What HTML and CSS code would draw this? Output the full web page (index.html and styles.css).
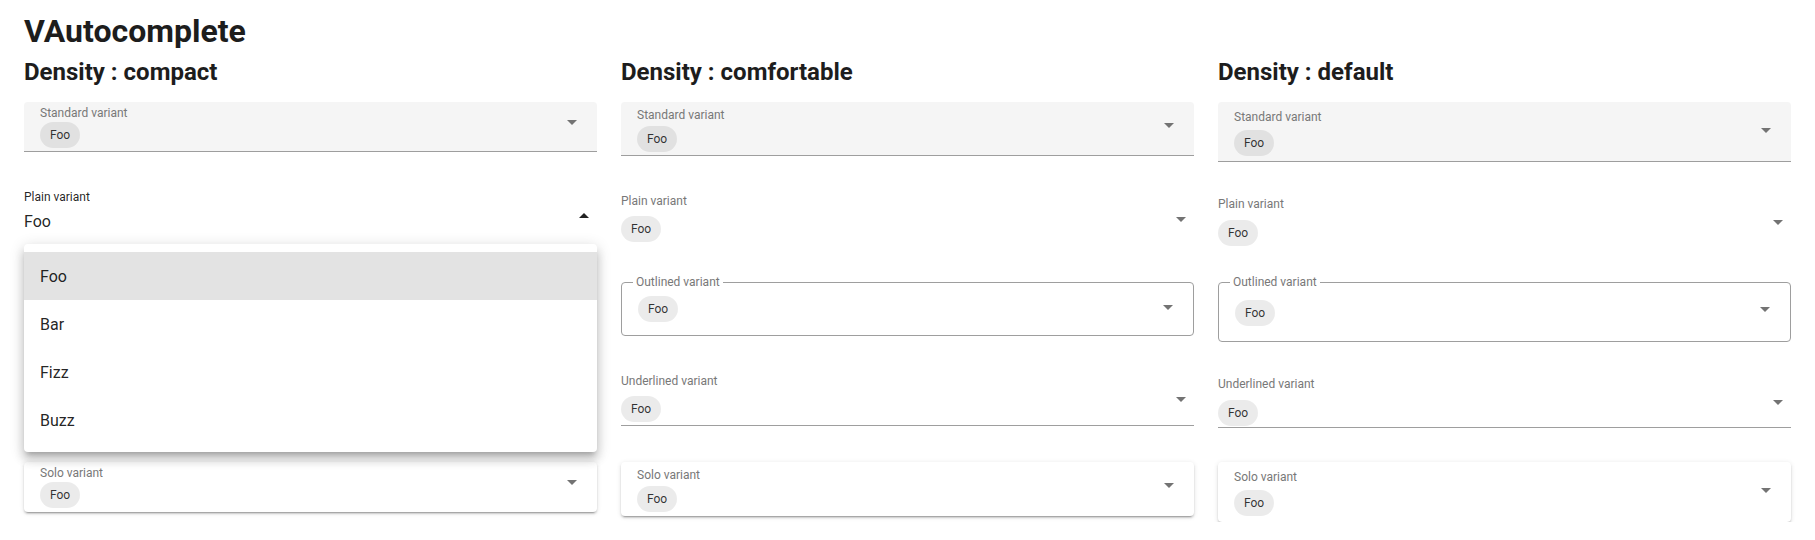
FILE: index.html
```html
<!DOCTYPE html>
<html lang="en">

<head>
    <meta charset="utf-8">
    <title>VAutocomplete</title>
    <link rel="stylesheet" href="styles.css">
</head>

<body>
    <div class="page">
        <h1 class="title">VAutocomplete</h1>

        <div class="columns">

            <!-- compact -->
            <section class="col compact">
                <h2 class="col-title">Density : compact</h2>

                <div class="cell">
                    <div class="field filled">
                        <div class="field-body">
                            <div class="label">Standard variant</div>
                            <span class="chip">Foo</span>
                        </div>
                        <svg class="arrow" viewBox="0 0 24 24"><path d="M7 10l5 5 5-5z" /></svg>
                    </div>
                </div>

                <!-- open menu covers the outlined + underlined rows -->
                <div class="cell">
                    <div class="field plain focused">
                        <div class="field-body">
                            <div class="label">Plain variant</div>
                            <div class="value">Foo</div>
                        </div>
                        <svg class="arrow" viewBox="0 0 24 24"><path d="M7 15l5-5 5 5z" /></svg>
                    </div>
                    <div class="menu">
                        <div class="menu-item active">Foo</div>
                        <div class="menu-item">Bar</div>
                        <div class="menu-item">Fizz</div>
                        <div class="menu-item">Buzz</div>
                    </div>
                </div>
                <div class="cell"></div>
                <div class="cell"></div>

                <div class="cell">
                    <div class="field solo">
                        <div class="field-body">
                            <div class="label">Solo variant</div>
                            <span class="chip">Foo</span>
                        </div>
                        <svg class="arrow" viewBox="0 0 24 24"><path d="M7 10l5 5 5-5z" /></svg>
                    </div>
                </div>
            </section>

            <!-- comfortable -->
            <section class="col comfortable">
                <h2 class="col-title">Density : comfortable</h2>

                <div class="cell">
                    <div class="field filled">
                        <div class="field-body">
                            <div class="label">Standard variant</div>
                            <span class="chip">Foo</span>
                        </div>
                        <svg class="arrow" viewBox="0 0 24 24"><path d="M7 10l5 5 5-5z" /></svg>
                    </div>
                </div>

                <div class="cell">
                    <div class="field plain">
                        <div class="field-body">
                            <div class="label">Plain variant</div>
                            <span class="chip">Foo</span>
                        </div>
                        <svg class="arrow" viewBox="0 0 24 24"><path d="M7 10l5 5 5-5z" /></svg>
                    </div>
                </div>

                <div class="cell">
                    <div class="field outlined">
                        <div class="label">Outlined variant</div>
                        <div class="field-body">
                            <span class="chip">Foo</span>
                        </div>
                        <svg class="arrow" viewBox="0 0 24 24"><path d="M7 10l5 5 5-5z" /></svg>
                    </div>
                </div>

                <div class="cell">
                    <div class="field underlined">
                        <div class="field-body">
                            <div class="label">Underlined variant</div>
                            <span class="chip">Foo</span>
                        </div>
                        <svg class="arrow" viewBox="0 0 24 24"><path d="M7 10l5 5 5-5z" /></svg>
                    </div>
                </div>

                <div class="cell">
                    <div class="field solo">
                        <div class="field-body">
                            <div class="label">Solo variant</div>
                            <span class="chip">Foo</span>
                        </div>
                        <svg class="arrow" viewBox="0 0 24 24"><path d="M7 10l5 5 5-5z" /></svg>
                    </div>
                </div>
            </section>

            <!-- default -->
            <section class="col default">
                <h2 class="col-title">Density : default</h2>

                <div class="cell">
                    <div class="field filled">
                        <div class="field-body">
                            <div class="label">Standard variant</div>
                            <span class="chip">Foo</span>
                        </div>
                        <svg class="arrow" viewBox="0 0 24 24"><path d="M7 10l5 5 5-5z" /></svg>
                    </div>
                </div>

                <div class="cell">
                    <div class="field plain">
                        <div class="field-body">
                            <div class="label">Plain variant</div>
                            <span class="chip">Foo</span>
                        </div>
                        <svg class="arrow" viewBox="0 0 24 24"><path d="M7 10l5 5 5-5z" /></svg>
                    </div>
                </div>

                <div class="cell">
                    <div class="field outlined">
                        <div class="label">Outlined variant</div>
                        <div class="field-body">
                            <span class="chip">Foo</span>
                        </div>
                        <svg class="arrow" viewBox="0 0 24 24"><path d="M7 10l5 5 5-5z" /></svg>
                    </div>
                </div>

                <div class="cell">
                    <div class="field underlined">
                        <div class="field-body">
                            <div class="label">Underlined variant</div>
                            <span class="chip">Foo</span>
                        </div>
                        <svg class="arrow" viewBox="0 0 24 24"><path d="M7 10l5 5 5-5z" /></svg>
                    </div>
                </div>

                <div class="cell">
                    <div class="field solo">
                        <div class="field-body">
                            <div class="label">Solo variant</div>
                            <span class="chip">Foo</span>
                        </div>
                        <svg class="arrow" viewBox="0 0 24 24"><path d="M7 10l5 5 5-5z" /></svg>
                    </div>
                </div>
            </section>

        </div>
    </div>
</body>

</html>
```

FILE: styles.css
```css
* {
    box-sizing: border-box;
}

body {
    margin: 0;
    background-color: #fff;
    color: rgba(0, 0, 0, 0.87);
    font-family: Roboto, "Liberation Sans", sans-serif;
}

.page {
    padding: 12px 12px 0;
}

.title {
    margin: 0;
    padding-left: 12px;
    font-size: 32px;
    line-height: 38px;
    font-weight: 700;
    color: #1d1d1d;
}

.columns {
    display: grid;
    grid-template-columns: repeat(3, 1fr);
}

.col {
    padding: 0 12px;
}

.col-title {
    margin: 8px 0 16px;
    font-size: 24px;
    line-height: 28px;
    font-weight: 700;
    color: #1d1d1d;
}

.cell {
    position: relative;
    height: 90px;
}

.cell:last-child {
    height: auto;
}

/* field basics */

.field {
    position: relative;
    display: flex;
    align-items: flex-start;
    padding: 0 13px 0 16px;
}

.field-body {
    flex: 1;
    min-width: 0;
}

.label {
    font-size: 12px;
    line-height: 16px;
    color: #787878;
    white-space: nowrap;
}

.chip {
    display: flex;
    align-items: center;
    width: max-content;
    height: 26px;
    padding: 0 10px;
    border-radius: 13px;
    background-color: rgba(0, 0, 0, 0.08);
    font-size: 12px;
    color: rgba(0, 0, 0, 0.8);
}

.arrow {
    flex: none;
    width: 24px;
    height: 24px;
    fill: #737373;
}

/* variants */

.filled {
    background-color: #f5f5f5;
    border-radius: 4px 4px 0 0;
    border-bottom: 1px solid #9e9e9e;
}

.solo {
    background-color: #fff;
    border-radius: 4px;
    box-shadow: 0 3px 1px -2px rgba(0, 0, 0, 0.2), 0 2px 2px 0 rgba(0, 0, 0, 0.14), 0 1px 5px 0 rgba(0, 0, 0, 0.12);
}

.outlined {
    border: 1px solid #9e9e9e;
    border-radius: 4px;
}

.outlined .label {
    position: absolute;
    left: 11px;
    top: -9px;
    padding: 0 3px;
    background-color: #fff;
}

.plain,
.underlined {
    padding: 0 1px 0 0;
}

.underlined {
    border-bottom: 1px solid #9e9e9e;
}

/* focused plain field with open menu */

.focused .label {
    margin-top: -3px;
    color: rgba(0, 0, 0, 0.87);
}

.focused .value {
    margin-top: 5px;
    padding-bottom: 8px;
    font-size: 16px;
    line-height: 24px;
}

.focused .arrow {
    margin-top: 11px;
    fill: #222;
}

.menu {
    position: absolute;
    top: 52px;
    left: 0;
    right: 0;
    z-index: 5;
    padding: 8px 0;
    background-color: #fff;
    border-radius: 4px;
    box-shadow: 0 5px 5px -3px rgba(0, 0, 0, 0.2), 0 8px 10px 1px rgba(0, 0, 0, 0.14), 0 3px 14px 2px rgba(0, 0, 0, 0.12);
}

.menu-item {
    display: flex;
    align-items: center;
    height: 48px;
    padding: 0 16px;
    font-size: 16px;
}

.menu-item.active {
    background-color: #e3e3e3;
}

/* density: compact */

.compact .filled .field-body {
    padding: 3px 0 3px;
}

.compact .solo .field-body {
    padding: 3px 0 4px;
}

.compact .filled .label,
.compact .solo .label {
    margin-bottom: 1px;
}

.compact .filled .arrow,
.compact .solo .arrow {
    margin-top: 8px;
}

/* density: comfortable */

.comfortable .filled .field-body {
    padding: 5px 0 3px;
}

.comfortable .solo .field-body {
    padding: 5px 0 4px;
}

.comfortable .filled .label,
.comfortable .solo .label {
    margin-bottom: 3px;
}

.comfortable .filled .arrow,
.comfortable .solo .arrow {
    margin-top: 11px;
}

.comfortable .plain .field-body {
    padding: 1px 0 4px;
}

.comfortable .underlined .field-body {
    padding: 1px 0 3px;
}

.comfortable .plain .label,
.comfortable .underlined .label {
    margin-bottom: 7px;
}

.comfortable .plain .arrow,
.comfortable .underlined .arrow {
    margin-top: 15px;
}

.comfortable .outlined .field-body {
    padding: 13px 0;
}

.comfortable .outlined .arrow {
    margin-top: 12px;
}

/* density: default */

.default .filled .field-body {
    padding: 7px 0 5px;
}

.default .solo .field-body {
    padding: 7px 0 6px;
}

.default .filled .label,
.default .solo .label {
    margin-bottom: 5px;
}

.default .filled .arrow,
.default .solo .arrow {
    margin-top: 16px;
}

.default .plain .field-body {
    padding: 4px 0 2px;
}

.default .underlined .field-body {
    padding: 4px 0 1px;
}

.default .plain .label,
.default .underlined .label {
    margin-bottom: 8px;
}

.default .plain .arrow,
.default .underlined .arrow {
    margin-top: 18px;
}

.default .outlined .field-body {
    padding: 17px 0 15px;
}

.default .outlined .arrow {
    margin-top: 14px;
}
```
